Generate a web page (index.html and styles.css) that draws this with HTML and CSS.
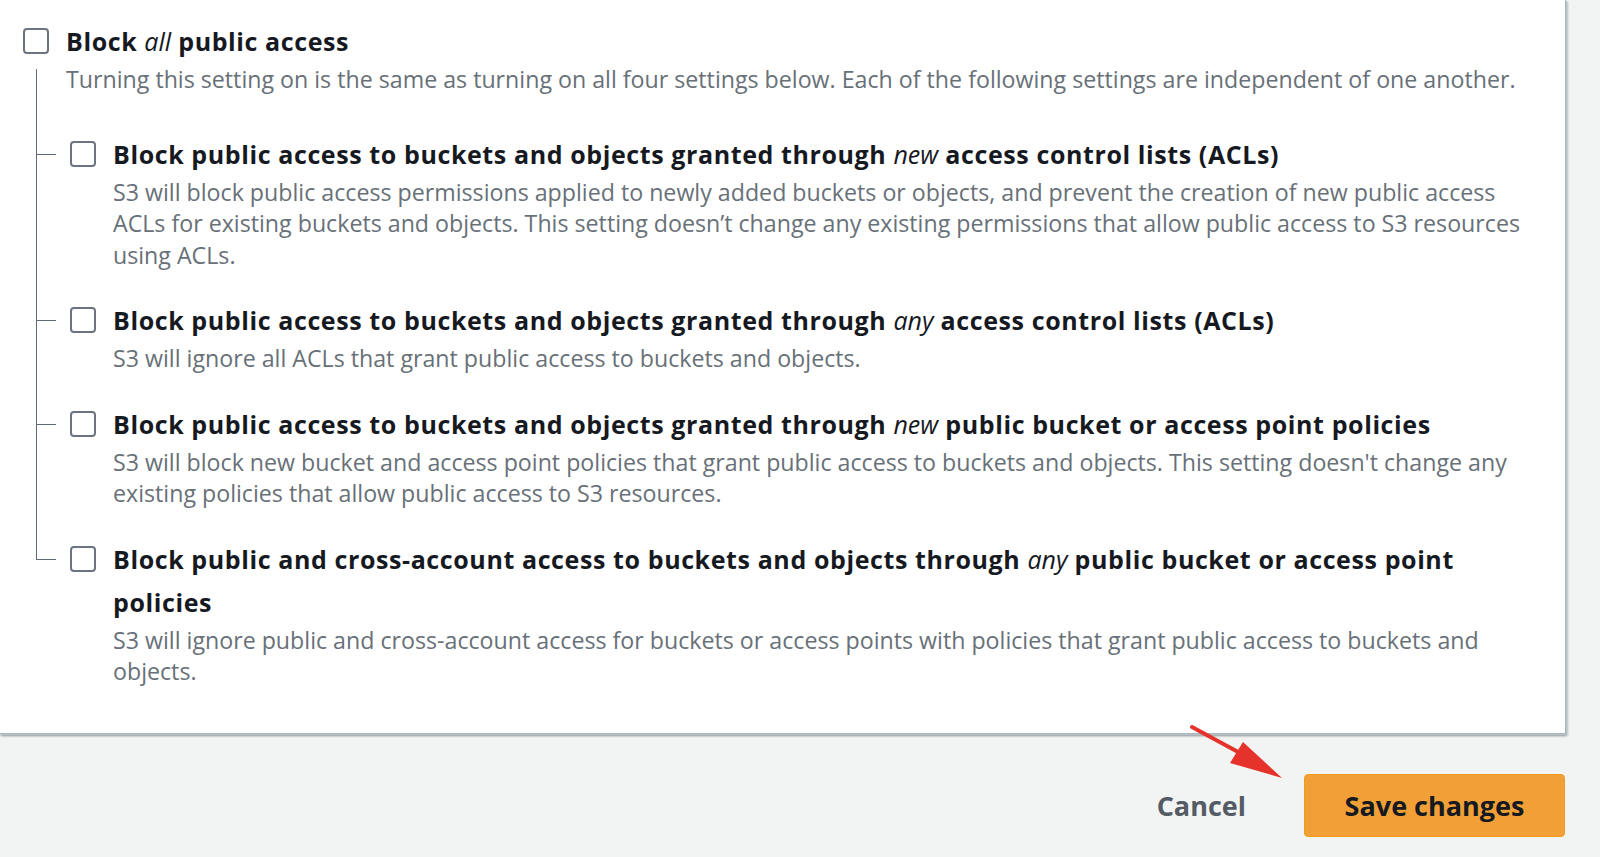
FILE: index.html
```html
<!DOCTYPE html>
<html lang="en">
<head>
<meta charset="utf-8">
<title>Block public access</title>
<link rel="stylesheet" href="styles.css">
</head>
<body>
<div class="page">
  <section class="card">
    <div class="option top">
      <span class="cb"></span>
      <div class="text">
        <div class="title">Block <em>all</em> public access</div>
        <div class="desc">Turning this setting on is the same as turning on all four settings below. Each of the following settings are independent of one another.</div>
      </div>
    </div>
    <div class="sub-list">
      <div class="option sub">
        <span class="cb"></span>
        <div class="text">
          <div class="title">Block public access to buckets and objects granted through <em>new</em> access control lists (ACLs)</div>
          <div class="desc">S3 will block public access permissions applied to newly added buckets or objects, and prevent the creation of new public access ACLs for existing buckets and objects. This setting doesn’t change any existing permissions that allow public access to S3 resources using ACLs.</div>
        </div>
      </div>
      <div class="option sub">
        <span class="cb"></span>
        <div class="text">
          <div class="title">Block public access to buckets and objects granted through <em>any</em> access control lists (ACLs)</div>
          <div class="desc">S3 will ignore all ACLs that grant public access to buckets and objects.</div>
        </div>
      </div>
      <div class="option sub">
        <span class="cb"></span>
        <div class="text">
          <div class="title">Block public access to buckets and objects granted through <em>new</em> public bucket or access point policies</div>
          <div class="desc">S3 will block new bucket and access point policies that grant public access to buckets and objects. This setting doesn't change any existing policies that allow public access to S3 resources.</div>
        </div>
      </div>
      <div class="option sub">
        <span class="cb"></span>
        <div class="text">
          <div class="title">Block public and cross-account access to buckets and objects through <em>any</em> public bucket or access point policies</div>
          <div class="desc">S3 will ignore public and cross-account access for buckets or access points with policies that grant public access to buckets and objects.</div>
        </div>
      </div>
    </div>
  </section>
  <div class="actions">
    <button class="btn cancel" type="button">Cancel</button>
    <button class="btn save" type="button">Save changes</button>
  </div>
  <svg class="arrow" width="100" height="60" viewBox="1188 722 100 60" aria-hidden="true">
    <line x1="1192" y1="727" x2="1240" y2="753" stroke="#e5322a" stroke-width="4" stroke-linecap="round"/>
    <polygon points="1243,742 1230,763 1282,778" fill="#e5322a"/>
  </svg>
</div>
</body>
</html>
```
FILE: styles.css
```css
* { box-sizing: border-box; }
html, body { margin: 0; padding: 0; }
body {
  background: #f2f3f3;
  font-family: "Open Sans", "Noto Sans", Arial, sans-serif;
  color: #16191f;
  width: 1600px;
  height: 857px;
  overflow: hidden;
}
.page {
  position: relative;
  height: 857px;
}
.card {
  width: 1566px;
  background: #ffffff;
  padding: 20px 31px 45px 23px;
  box-shadow: 1px 1px 0 0 #b7c0c4, 2px 2px 2px 0 rgba(0, 28, 36, 0.22), 0 2px 2px 0 rgba(0, 28, 36, 0.25);
  border-bottom: 1px solid #aab7b8;
  border-right: 1px solid #aab7b8;
}
.option {
  display: flex;
  align-items: flex-start;
  gap: 17px;
}
.cb {
  flex: 0 0 auto;
  width: 26px;
  height: 26px;
  margin-top: 8px;
  border: 2px solid #6b7480;
  border-radius: 4px;
  background: #fff;
}
.text { flex: 1 1 auto; min-width: 0; }
.title {
  font-size: 25px;
  font-weight: 700;
  line-height: 43px;
  letter-spacing: 0.6px;
  color: #16191f;
}
.title em {
  font-style: italic;
  font-weight: 400;
  letter-spacing: 0;
}
.desc {
  margin-top: 1px;
  font-size: 23.2px;
  line-height: 31.5px;
  color: #687078;
}
.sub-list {
  margin-left: 47px;
}
.sub {
  position: relative;
  padding-top: 28px;
}
.sub:first-child { padding-top: 37px; }
.sub::before {
  content: "";
  position: absolute;
  left: -34px;
  top: 0;
  bottom: 0;
  border-left: 1px solid #5f6b7a;
}
.sub:first-child::before { top: -27px; }
.sub::after {
  content: "";
  position: absolute;
  left: -34px;
  width: 20px;
  top: 49px;
  border-top: 1px solid #5f6b7a;
}
.sub:first-child::after { top: 58px; }
.sub:last-child::before {
  bottom: auto;
  height: 49px;
}
.sub:last-child::after { top: 49px; }
.actions {
  display: flex;
  justify-content: flex-end;
  align-items: center;
  gap: 34px;
  margin-top: 40px;
  padding-right: 35px;
}
.btn {
  font-family: "Open Sans", "Noto Sans", Arial, sans-serif;
  font-size: 27px;
  font-weight: 700;
  height: 63px;
  cursor: pointer;
}
.cancel {
  background: transparent;
  border: 0;
  color: #545b64;
  padding: 0 24px;
}
.save {
  width: 261px;
  background: #f0a037;
  border: 1px solid #f39a1b;
  border-radius: 4px;
  color: #16191f;
  padding: 0;
}
.arrow {
  position: absolute;
  left: 1188px;
  top: 722px;
}
```
